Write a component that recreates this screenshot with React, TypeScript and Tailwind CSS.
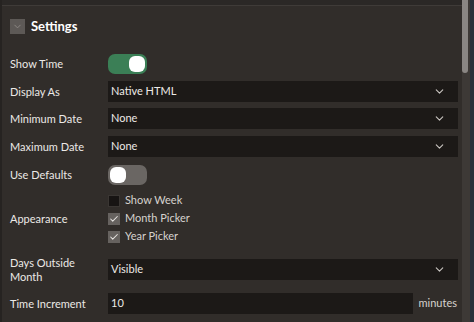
import { ChevronDown, Check } from 'lucide-react';

function Select({ value }: { value: string }) {
  return (
    <div className="flex h-[21px] w-full items-center justify-between bg-[#1c1917] pl-[3px] pr-[12px] text-[11px] text-[#ece9e6]">
      <span>{value}</span>
      <ChevronDown size={13} strokeWidth={2} className="text-[#c9c5c1]" />
    </div>
  );
}

function Toggle({ on }: { on: boolean }) {
  return (
    <div
      className={`flex h-[20px] w-[39px] items-center rounded-[7px] px-[2px] ${
        on ? 'justify-end bg-[#3b7f56]' : 'justify-start bg-[#6a6663]'
      }`}
    >
      <div className="h-[16px] w-[16px] rounded-[6px] bg-white" />
    </div>
  );
}

function Box({ checked, label }: { checked: boolean; label: string }) {
  return (
    <div className="flex h-[18px] items-center gap-[5px]">
      <div
        className={`flex h-[12px] w-[12px] items-center justify-center ${
          checked ? 'bg-[#66625f]' : 'bg-[#171413] border border-[#3a3633]'
        }`}
      >
        {checked && <Check size={10} strokeWidth={2.5} className="text-[#e8e5e2]" />}
      </div>
      <span className="text-[11px] text-[#d6d2ce]">{label}</span>
    </div>
  );
}

function Row({ label, children, h }: { label: React.ReactNode; children: React.ReactNode; h: string }) {
  return (
    <div className={`flex items-center ${h}`}>
      <div className="w-[98px] text-[11px] leading-[14px] text-[#ece9e6]">{label}</div>
      <div className="flex flex-1 items-center">{children}</div>
    </div>
  );
}

export default function App() {
  return (
    <div
      className="flex h-[322px] w-[474px] overflow-hidden bg-[#312d2a]"
      style={{ fontFamily: 'Lato, "Liberation Sans", sans-serif' }}
    >
      <div className="flex flex-1 flex-col border-l-[2px] border-[#262321]">
        <div className="h-[6px] border-b border-[#3f3b38] bg-[#2b2826]" />
        <div className="flex items-center gap-[6px] pl-[8px] pt-[11px]">
          <div className="flex h-[15px] w-[15px] items-center justify-center bg-[#5d5956]">
            <ChevronDown size={11} strokeWidth={2} className="text-[#8e8a87]" />
          </div>
          <span className="text-[13px] font-bold text-white">Settings</span>
        </div>
        <div className="flex flex-col pl-[8px] pr-[4px] pt-[14px]">
          <Row label="Show Time" h="h-[26px]">
            <Toggle on />
          </Row>
          <Row label="Display As" h="h-[30px]">
            <Select value="Native HTML" />
          </Row>
          <Row label="Minimum Date" h="h-[24px]">
            <Select value="None" />
          </Row>
          <Row label="Maximum Date" h="h-[32px]">
            <Select value="None" />
          </Row>
          <Row label="Use Defaults" h="h-[24px]">
            <Toggle on={false} />
          </Row>
          <Row label="Appearance" h="h-[64px]">
            <div className="flex flex-col">
              <Box checked={false} label="Show Week" />
              <Box checked label="Month Picker" />
              <Box checked label="Year Picker" />
            </div>
          </Row>
          <Row label={<>Days Outside<br />Month</>} h="h-[38px]">
            <Select value="Visible" />
          </Row>
          <Row label="Time Increment" h="h-[30px]">
            <div className="flex h-[21px] flex-1 items-center bg-[#1c1917] pl-[3px] text-[11px] text-[#ece9e6]">
              10
            </div>
            <span className="ml-[6px] mr-[1px] text-[11px] text-[#d6d2ce]">minutes</span>
          </Row>
        </div>
      </div>
      <div className="flex w-[8px] flex-col bg-[#3d3936]">
        <div className="h-[73px] w-[6px] rounded-b-[3px] bg-[#8a8683]" />
      </div>
      <div className="w-[4px] bg-[#28303a]" />
    </div>
  );
}
